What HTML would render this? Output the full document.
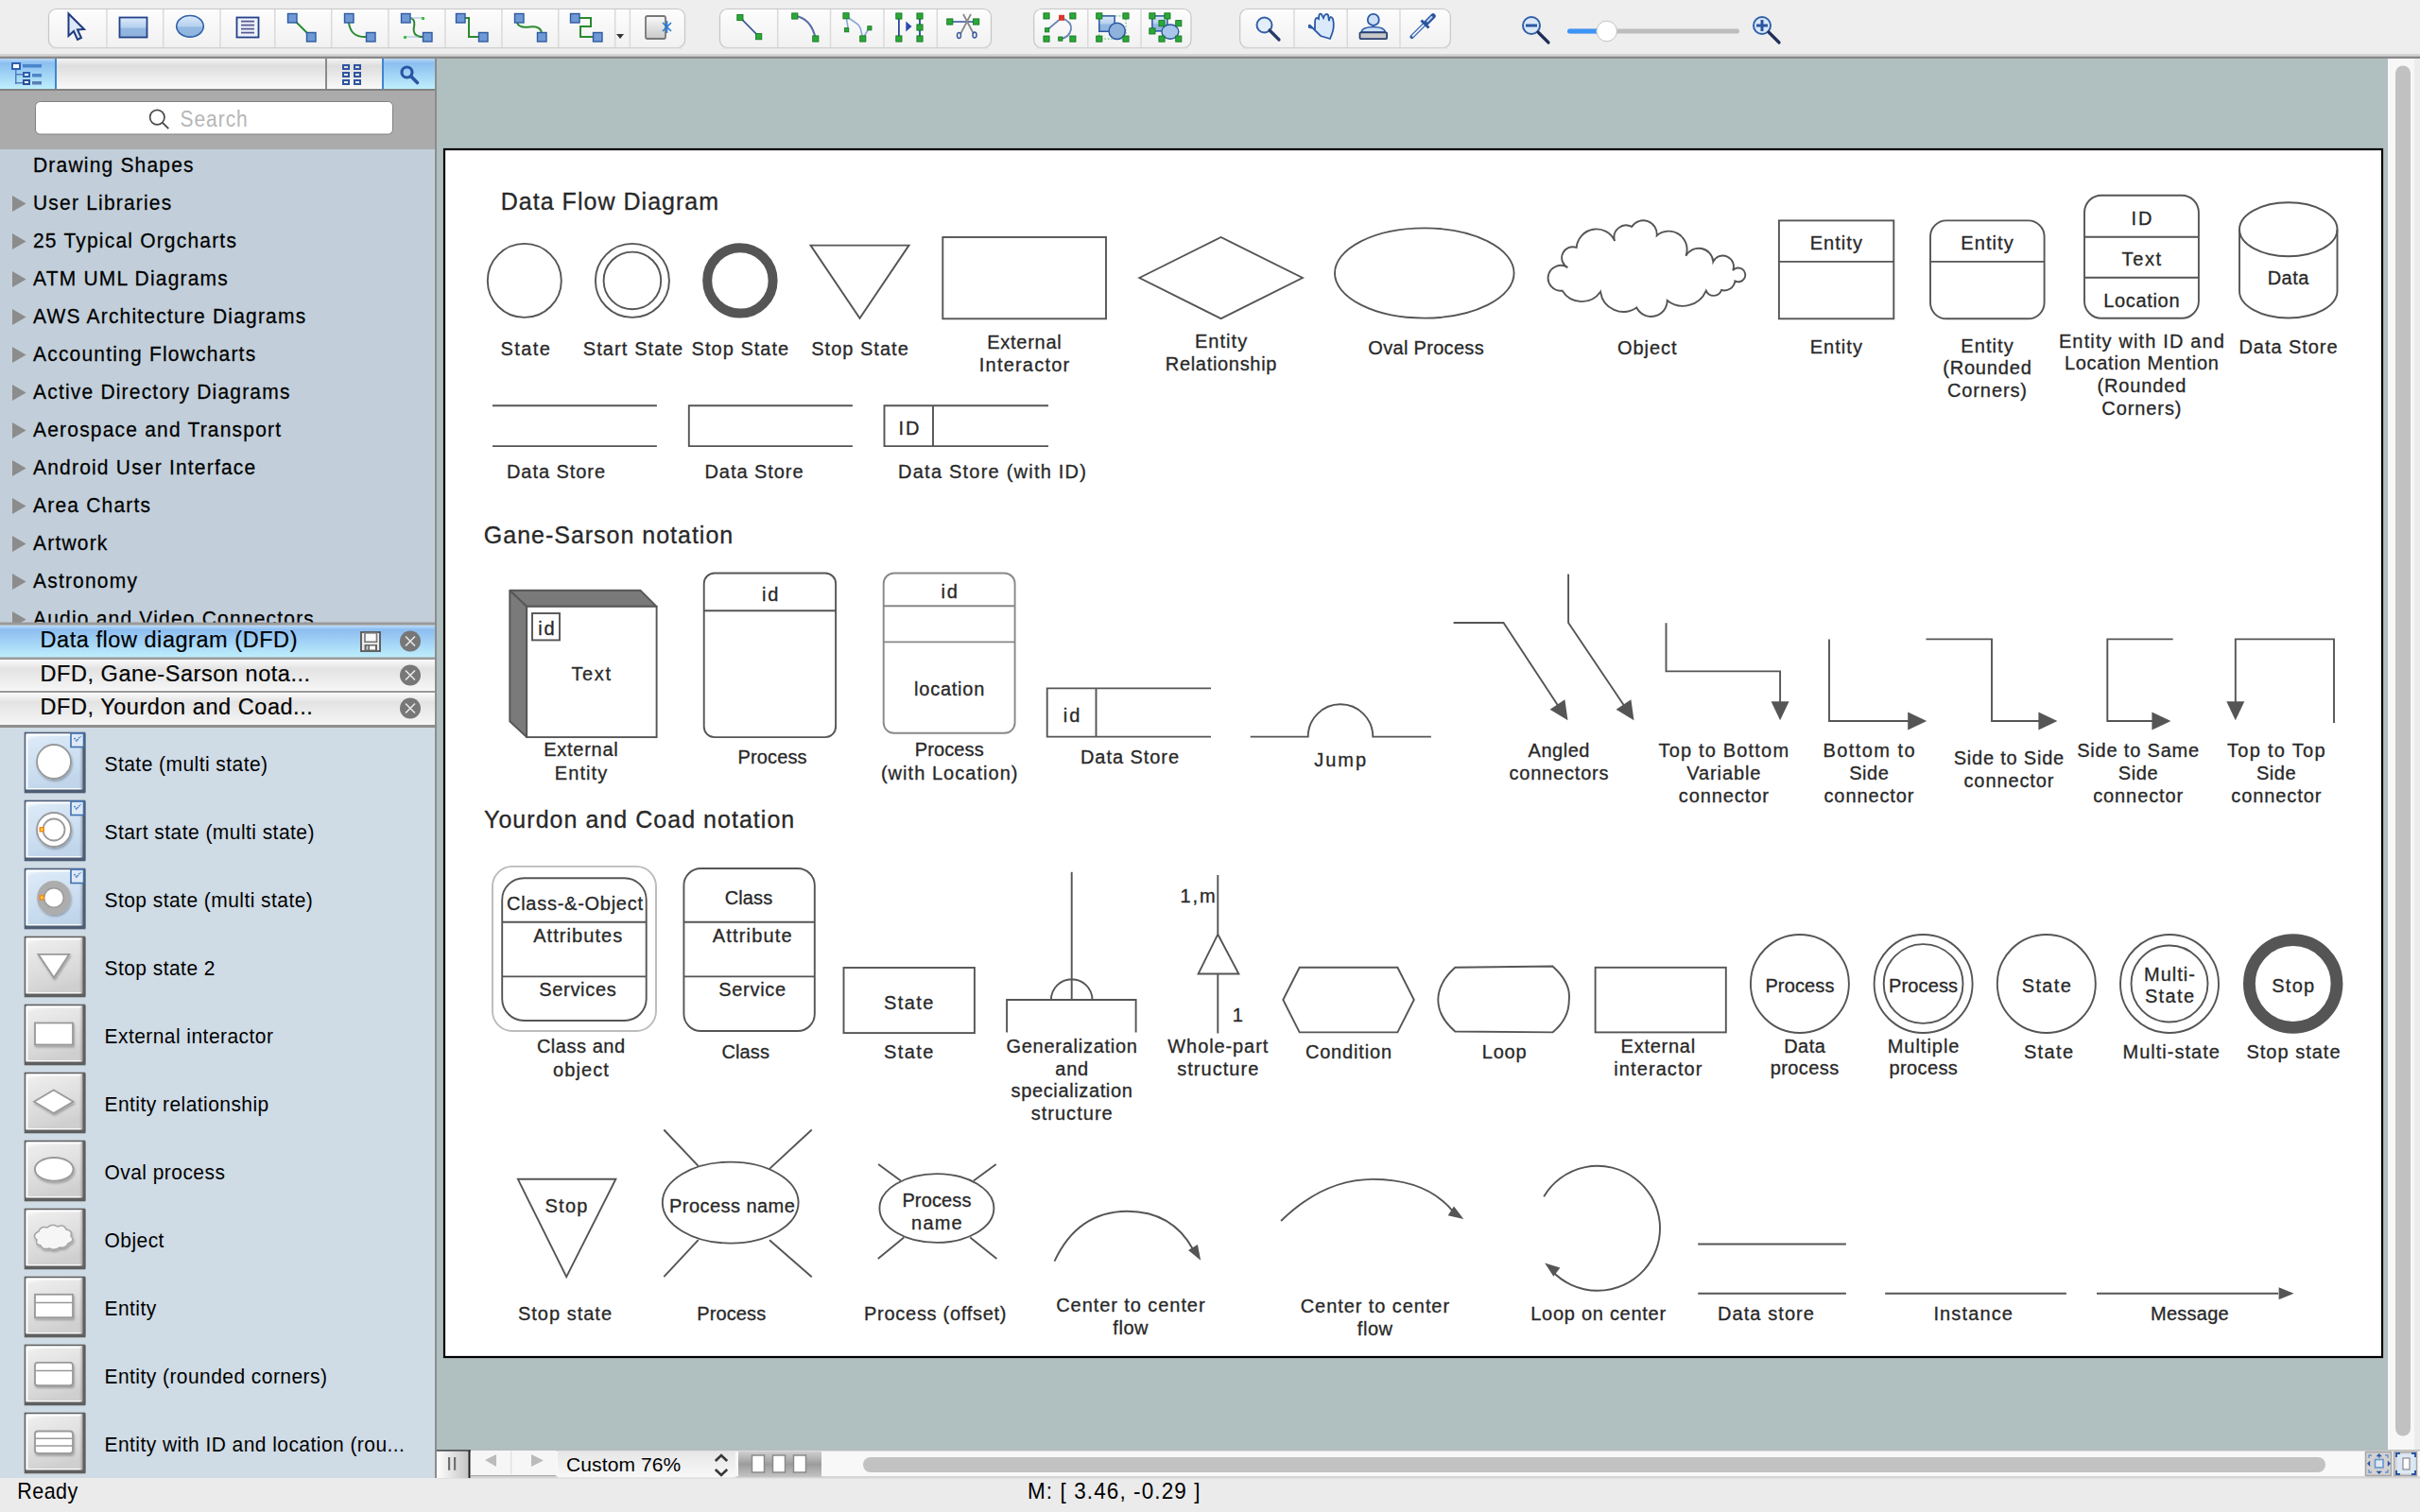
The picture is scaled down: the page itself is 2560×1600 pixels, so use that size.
<!DOCTYPE html>
<html><head><meta charset="utf-8"><title>ConceptDraw - DFD</title>
<style>html,body{margin:0;padding:0;background:#ececec;} body{width:2560px;height:1600px;overflow:hidden;} svg{display:block;font-family:"Liberation Sans", sans-serif;}</style>
</head><body>
<svg width="2560" height="1600" viewBox="0 0 2560 1600" font-family="Liberation Sans, sans-serif">
<defs><linearGradient id="pgbtnL" x1="0" y1="0" x2="0" y2="1"><stop offset="0" stop-color="#fafafa"/><stop offset="1" stop-color="#c8c8c8"/></linearGradient></defs>
<rect x="0" y="0" width="2560" height="1600" fill="#ebebeb"/>
<rect x="0" y="0" width="2560" height="60" fill="#eeeeee"/>
<rect x="0" y="57" width="2560" height="2.6" fill="#d4d4d4"/>
<rect x="0" y="59.6" width="2560" height="2.4" fill="#898989"/>
<rect x="462" y="62" width="2064" height="1472" fill="#b0bfbf"/>
<rect x="2526" y="62" width="34" height="1472" fill="#f7f7f7"/>
<rect x="2554" y="62" width="6" height="1472" fill="#ececec"/>
<rect x="2534" y="69.5" width="16" height="1450" rx="8" fill="#c1c1c1"/>
<rect x="470" y="158" width="2050" height="1278" fill="#ffffff" stroke="#000" stroke-width="2.2"/>
<rect x="0" y="62" width="460" height="1502" fill="#cfdbe5"/>
<rect x="460" y="62" width="2" height="1502" fill="#8c8c8c"/>
<defs><linearGradient id="hdr" x1="0" y1="0" x2="0" y2="1"><stop offset="0" stop-color="#f3f3f3"/><stop offset="0.25" stop-color="#dedede"/><stop offset="1" stop-color="#f9f9f9"/></linearGradient><linearGradient id="blu" x1="0" y1="0" x2="0" y2="1"><stop offset="0" stop-color="#b9d7f5"/><stop offset="0.15" stop-color="#8bbff0"/><stop offset="1" stop-color="#bdeefc"/></linearGradient><linearGradient id="tabsel" x1="0" y1="0" x2="0" y2="1"><stop offset="0" stop-color="#bcdcfa"/><stop offset="0.13" stop-color="#8dbdf0"/><stop offset="1" stop-color="#bdeefc"/></linearGradient><linearGradient id="tab" x1="0" y1="0" x2="0" y2="1"><stop offset="0" stop-color="#fafafa"/><stop offset="0.3" stop-color="#e3e3e3"/><stop offset="1" stop-color="#f6f6f6"/></linearGradient><linearGradient id="tbtn" x1="0" y1="0" x2="0" y2="1"><stop offset="0" stop-color="#fdfdfd"/><stop offset="1" stop-color="#f1f1f1"/></linearGradient><linearGradient id="icoB" x1="0" y1="0" x2="0" y2="1"><stop offset="0" stop-color="#dcebfb"/><stop offset="0.5" stop-color="#b5d0ee"/><stop offset="0.55" stop-color="#93b8e2"/><stop offset="1" stop-color="#8fb3dc"/></linearGradient><linearGradient id="libI" x1="0" y1="0" x2="0.3" y2="1"><stop offset="0" stop-color="#ffffff"/><stop offset="0.12" stop-color="#ececec"/><stop offset="0.85" stop-color="#d6d6d6"/><stop offset="1" stop-color="#cfcfcf"/></linearGradient><linearGradient id="libIB" x1="0" y1="0" x2="0.3" y2="1"><stop offset="0" stop-color="#ffffff"/><stop offset="0.12" stop-color="#dbe9f7"/><stop offset="0.85" stop-color="#c6daee"/><stop offset="1" stop-color="#c0d4ea"/></linearGradient><linearGradient id="pgbtn" x1="0" y1="0" x2="0" y2="1"><stop offset="0" stop-color="#cfcfcf"/><stop offset="0.5" stop-color="#9c9c9c"/><stop offset="1" stop-color="#c4c4c4"/></linearGradient><linearGradient id="zsel" x1="0" y1="0" x2="0" y2="1"><stop offset="0" stop-color="#e6e6e6"/><stop offset="1" stop-color="#f8f8f8"/></linearGradient><linearGradient id="pausebg" x1="0" y1="0" x2="1" y2="0"><stop offset="0" stop-color="#ffffff"/><stop offset="1" stop-color="#c4c4c4"/></linearGradient><linearGradient id="libR" x1="0" y1="0" x2="1" y2="0"><stop offset="0" stop-color="#000" stop-opacity="0"/><stop offset="1" stop-color="#000" stop-opacity="0.25"/></linearGradient><filter id="lsh" x="-30%" y="-30%" width="160%" height="160%"><feDropShadow dx="1" dy="2" stdDeviation="1.3" flood-color="#000" flood-opacity="0.26"/></filter><linearGradient id="bbar" x1="0" y1="0" x2="0" y2="1"><stop offset="0" stop-color="#ffffff"/><stop offset="1" stop-color="#ececec"/></linearGradient></defs>
<rect x="0" y="62" width="460" height="32" fill="url(#hdr)"/>
<rect x="0" y="62" width="58" height="32" fill="url(#blu)"/>
<rect x="58" y="62" width="2" height="32" fill="#3f86cf"/>
<rect x="344" y="62" width="2" height="32" fill="#8a8a8a"/>
<rect x="404" y="62" width="56" height="32" fill="url(#blu)"/>
<rect x="404" y="62" width="2" height="32" fill="#3f86cf"/>
<rect x="0" y="94" width="460" height="2" fill="#828282"/>
<g fill="#3b6bb8"><rect x="12" y="66" width="10" height="8" fill="#2f5fb0"/><rect x="14" y="68" width="6" height="4" fill="#fff"/><rect x="24" y="68" width="20" height="3.5" fill="#4a86cc"/><rect x="16" y="74" width="1.5" height="15" fill="#4f7fc0"/><rect x="16" y="78" width="8" height="1.5" fill="#4f7fc0"/><rect x="16" y="87" width="8" height="1.5" fill="#4f7fc0"/><rect x="24" y="76" width="8" height="6" fill="#2f5fb0"/><rect x="26" y="78" width="4" height="2" fill="#fff"/><rect x="24" y="84" width="8" height="6" fill="#2a4f9c"/><rect x="26" y="86" width="4" height="2" fill="#fff"/><rect x="34" y="78" width="10" height="3.5" fill="#4f84c4"/><rect x="34" y="86" width="10" height="3.5" fill="#5a7fb0"/></g>
<rect x="363" y="69" width="6" height="4" fill="none" stroke="#2f55a0" stroke-width="2"/>
<rect x="363" y="77" width="6" height="4" fill="none" stroke="#2f55a0" stroke-width="2"/>
<rect x="363" y="85" width="6" height="4" fill="none" stroke="#2f55a0" stroke-width="2"/>
<rect x="375" y="69" width="6" height="4" fill="none" stroke="#2f55a0" stroke-width="2"/>
<rect x="375" y="77" width="6" height="4" fill="none" stroke="#2f55a0" stroke-width="2"/>
<rect x="375" y="85" width="6" height="4" fill="none" stroke="#2f55a0" stroke-width="2"/>
<circle cx="430.5" cy="76.5" r="5.5" fill="none" stroke="#2b55a3" stroke-width="3.2"/>
<line x1="434.5" y1="80.5" x2="441.5" y2="87.5" stroke="#2b55a3" stroke-width="3.6" stroke-linecap="round"/>
<rect x="0" y="96" width="460" height="62" fill="#ababab"/>
<rect x="37.5" y="107.5" width="378" height="34.5" rx="5" fill="#fff" stroke="#808080" stroke-width="1"/>
<circle cx="166.3" cy="124.1" r="7.7" fill="none" stroke="#4a4a4a" stroke-width="1.7"/>
<line x1="171.7" y1="129.6" x2="178.3" y2="136.2" stroke="#4a4a4a" stroke-width="1.9"/>
<text transform="translate(190.5 134) scale(1 1.1)" font-size="21" text-anchor="start" fill="#b6b6b6" letter-spacing="0.95" >Search</text>
<rect x="0" y="158" width="460" height="501" fill="#c2cfda"/>
<clipPath id="treeclip"><rect x="0" y="158" width="460" height="501"/></clipPath><g clip-path="url(#treeclip)">
<text transform="translate(35 182) scale(1 1.09)" font-size="21" text-anchor="start" fill="#000" letter-spacing="1.2" stroke="#000" stroke-width="0.25">Drawing Shapes</text>
<path d="M13 207 L27.6 215.5 L13 224 Z" fill="#8c8c8c"/>
<text transform="translate(35 222) scale(1 1.09)" font-size="21" text-anchor="start" fill="#000" letter-spacing="1.2" stroke="#000" stroke-width="0.25">User Libraries</text>
<path d="M13 247 L27.6 255.5 L13 264 Z" fill="#8c8c8c"/>
<text transform="translate(35 262) scale(1 1.09)" font-size="21" text-anchor="start" fill="#000" letter-spacing="1.2" stroke="#000" stroke-width="0.25">25 Typical Orgcharts</text>
<path d="M13 287 L27.6 295.5 L13 304 Z" fill="#8c8c8c"/>
<text transform="translate(35 302) scale(1 1.09)" font-size="21" text-anchor="start" fill="#000" letter-spacing="1.2" stroke="#000" stroke-width="0.25">ATM UML Diagrams</text>
<path d="M13 327 L27.6 335.5 L13 344 Z" fill="#8c8c8c"/>
<text transform="translate(35 342) scale(1 1.09)" font-size="21" text-anchor="start" fill="#000" letter-spacing="1.2" stroke="#000" stroke-width="0.25">AWS Architecture Diagrams</text>
<path d="M13 367 L27.6 375.5 L13 384 Z" fill="#8c8c8c"/>
<text transform="translate(35 382) scale(1 1.09)" font-size="21" text-anchor="start" fill="#000" letter-spacing="1.2" stroke="#000" stroke-width="0.25">Accounting Flowcharts</text>
<path d="M13 407 L27.6 415.5 L13 424 Z" fill="#8c8c8c"/>
<text transform="translate(35 422) scale(1 1.09)" font-size="21" text-anchor="start" fill="#000" letter-spacing="1.2" stroke="#000" stroke-width="0.25">Active Directory Diagrams</text>
<path d="M13 447 L27.6 455.5 L13 464 Z" fill="#8c8c8c"/>
<text transform="translate(35 462) scale(1 1.09)" font-size="21" text-anchor="start" fill="#000" letter-spacing="1.2" stroke="#000" stroke-width="0.25">Aerospace and Transport</text>
<path d="M13 487 L27.6 495.5 L13 504 Z" fill="#8c8c8c"/>
<text transform="translate(35 502) scale(1 1.09)" font-size="21" text-anchor="start" fill="#000" letter-spacing="1.2" stroke="#000" stroke-width="0.25">Android User Interface</text>
<path d="M13 527 L27.6 535.5 L13 544 Z" fill="#8c8c8c"/>
<text transform="translate(35 542) scale(1 1.09)" font-size="21" text-anchor="start" fill="#000" letter-spacing="1.2" stroke="#000" stroke-width="0.25">Area Charts</text>
<path d="M13 567 L27.6 575.5 L13 584 Z" fill="#8c8c8c"/>
<text transform="translate(35 582) scale(1 1.09)" font-size="21" text-anchor="start" fill="#000" letter-spacing="1.2" stroke="#000" stroke-width="0.25">Artwork</text>
<path d="M13 607 L27.6 615.5 L13 624 Z" fill="#8c8c8c"/>
<text transform="translate(35 622) scale(1 1.09)" font-size="21" text-anchor="start" fill="#000" letter-spacing="1.2" stroke="#000" stroke-width="0.25">Astronomy</text>
<path d="M13 647 L27.6 655.5 L13 664 Z" fill="#8c8c8c"/>
<text transform="translate(35 662) scale(1 1.09)" font-size="21" text-anchor="start" fill="#000" letter-spacing="1.2" stroke="#000" stroke-width="0.25">Audio and Video Connectors</text>
</g>
<rect x="0" y="658.5" width="460" height="3" fill="#9a9a9a"/>
<rect x="0" y="662" width="460" height="33.5" fill="url(#tabsel)"/>
<text x="42.5" y="685.2" font-size="23.5" text-anchor="start" fill="#000" letter-spacing="0.55" stroke="#000" stroke-width="0.2">Data flow diagram (DFD)</text>
<circle cx="434" cy="678.5" r="11" fill="#777"/>
<path d="M429 673.5 L439 683.5 M439 673.5 L429 683.5" stroke="#e8e8e8" stroke-width="1.6"/>
<rect x="0" y="695.5" width="460" height="2.5" fill="#9a9a9a"/>
<rect x="0" y="698" width="460" height="33" fill="url(#tab)"/>
<text x="42.5" y="721.2" font-size="23.5" text-anchor="start" fill="#000" letter-spacing="0.55" stroke="#000" stroke-width="0.2">DFD, Gane-Sarson nota...</text>
<circle cx="434" cy="714.5" r="11" fill="#777"/>
<path d="M429 709.5 L439 719.5 M439 709.5 L429 719.5" stroke="#e8e8e8" stroke-width="1.6"/>
<rect x="0" y="731" width="460" height="2.5" fill="#9a9a9a"/>
<rect x="0" y="733" width="460" height="34" fill="url(#tab)"/>
<text x="42.5" y="756.2" font-size="23.5" text-anchor="start" fill="#000" letter-spacing="0.55" stroke="#000" stroke-width="0.2">DFD, Yourdon and Coad...</text>
<circle cx="434" cy="749.5" r="11" fill="#777"/>
<path d="M429 744.5 L439 754.5 M439 744.5 L429 754.5" stroke="#e8e8e8" stroke-width="1.6"/>
<rect x="0" y="767" width="460" height="3" fill="#8e8e8e"/>
<rect x="382" y="669" width="20" height="20" fill="#ececec" stroke="#555" stroke-width="1.8"/>
<rect x="386" y="669.8" width="12.5" height="9.5" fill="#fafafa" stroke="#777" stroke-width="1.6"/>
<rect x="385.5" y="682" width="13.5" height="7" fill="#666"/><rect x="391" y="683.5" width="6" height="4" fill="#fafafa"/><rect x="387.5" y="683.5" width="2" height="4" fill="#ccc"/>
<rect x="26.5" y="775.5" width="63" height="63" fill="#c8dbef" stroke="#4d5d73" stroke-width="1.6"/>
<rect x="28" y="777" width="59" height="59" fill="url(#libIB)"/>
<path d="M28.5 835 L86 835 M28.5 777.5 L86 777.5 M28.5 777.5 L28.5 835" stroke="#fff" stroke-width="2" opacity="0.9"/>
<rect x="84" y="777" width="4" height="59" fill="url(#libR)"/>
<path d="M27 837 L89 837 L89 776" fill="none" stroke="#4d5d73" stroke-width="3"/>
<text transform="translate(110.5 815.5) scale(1 1.08)" font-size="21" text-anchor="start" fill="#000" letter-spacing="0.45" >State (multi state)</text>
<g filter="url(#lsh)">
<circle cx="57" cy="806" r="18" fill="#fff" stroke="#999" stroke-width="1.8"/>
</g>
<rect x="75" y="776" width="13.5" height="14.5" fill="#dfeaf6" stroke="#3f70b0" stroke-width="1.6"/>
<path d="M78.5 781 L81 784 L85.5 779" fill="none" stroke="#3f78c0" stroke-width="1.6" stroke-dasharray="1.5 1"/>
<rect x="26.5" y="847.5" width="63" height="63" fill="#c8dbef" stroke="#4d5d73" stroke-width="1.6"/>
<rect x="28" y="849" width="59" height="59" fill="url(#libIB)"/>
<path d="M28.5 907 L86 907 M28.5 849.5 L86 849.5 M28.5 849.5 L28.5 907" stroke="#fff" stroke-width="2" opacity="0.9"/>
<rect x="84" y="849" width="4" height="59" fill="url(#libR)"/>
<path d="M27 909 L89 909 L89 848" fill="none" stroke="#4d5d73" stroke-width="3"/>
<text transform="translate(110.5 887.5) scale(1 1.08)" font-size="21" text-anchor="start" fill="#000" letter-spacing="0.45" >Start state (multi state)</text>
<g filter="url(#lsh)">
<circle cx="57" cy="878" r="18" fill="#fff" stroke="#999" stroke-width="1.8"/>
<circle cx="57" cy="878" r="11.5" fill="#fff" stroke="#999" stroke-width="1.8"/>
<rect x="41.5" y="875" width="5.5" height="5.5" fill="#f08a20"/><rect x="43" y="876.5" width="2.5" height="2.5" fill="#ffd040"/>
</g>
<rect x="75" y="848" width="13.5" height="14.5" fill="#dfeaf6" stroke="#3f70b0" stroke-width="1.6"/>
<path d="M78.5 853 L81 856 L85.5 851" fill="none" stroke="#3f78c0" stroke-width="1.6" stroke-dasharray="1.5 1"/>
<rect x="26.5" y="919.5" width="63" height="63" fill="#c8dbef" stroke="#4d5d73" stroke-width="1.6"/>
<rect x="28" y="921" width="59" height="59" fill="url(#libIB)"/>
<path d="M28.5 979 L86 979 M28.5 921.5 L86 921.5 M28.5 921.5 L28.5 979" stroke="#fff" stroke-width="2" opacity="0.9"/>
<rect x="84" y="921" width="4" height="59" fill="url(#libR)"/>
<path d="M27 981 L89 981 L89 920" fill="none" stroke="#4d5d73" stroke-width="3"/>
<text transform="translate(110.5 959.5) scale(1 1.08)" font-size="21" text-anchor="start" fill="#000" letter-spacing="0.45" >Stop state (multi state)</text>
<g filter="url(#lsh)">
<circle cx="57" cy="950" r="14.2" fill="#fff" stroke="#adadad" stroke-width="7.4"/>
<circle cx="57" cy="950" r="10.3" fill="#fff" stroke="#999" stroke-width="1.4"/>
<rect x="41.5" y="947" width="5.5" height="5.5" fill="#f08a20"/><rect x="43" y="948.5" width="2.5" height="2.5" fill="#ffd040"/>
</g>
<rect x="75" y="920" width="13.5" height="14.5" fill="#dfeaf6" stroke="#3f70b0" stroke-width="1.6"/>
<path d="M78.5 925 L81 928 L85.5 923" fill="none" stroke="#3f78c0" stroke-width="1.6" stroke-dasharray="1.5 1"/>
<rect x="26.5" y="991.5" width="63" height="63" fill="#d9d9d9" stroke="#5f5f5f" stroke-width="1.6"/>
<rect x="28" y="993" width="59" height="59" fill="url(#libI)"/>
<path d="M28.5 1051 L86 1051 M28.5 993.5 L86 993.5 M28.5 993.5 L28.5 1051" stroke="#fff" stroke-width="2" opacity="0.9"/>
<rect x="84" y="993" width="4" height="59" fill="url(#libR)"/>
<path d="M27 1053 L89 1053 L89 992" fill="none" stroke="#5f5f5f" stroke-width="3"/>
<text transform="translate(110.5 1031.5) scale(1 1.08)" font-size="21" text-anchor="start" fill="#000" letter-spacing="0.45" >Stop state 2</text>
<g filter="url(#lsh)">
<path d="M40.5 1009.8 L73.3 1009.8 L57 1034.5 Z" fill="#fff" stroke="#999" stroke-width="1.8"/>
</g>
<rect x="26.5" y="1063.5" width="63" height="63" fill="#d9d9d9" stroke="#5f5f5f" stroke-width="1.6"/>
<rect x="28" y="1065" width="59" height="59" fill="url(#libI)"/>
<path d="M28.5 1123 L86 1123 M28.5 1065.5 L86 1065.5 M28.5 1065.5 L28.5 1123" stroke="#fff" stroke-width="2" opacity="0.9"/>
<rect x="84" y="1065" width="4" height="59" fill="url(#libR)"/>
<path d="M27 1125 L89 1125 L89 1064" fill="none" stroke="#5f5f5f" stroke-width="3"/>
<text transform="translate(110.5 1103.5) scale(1 1.08)" font-size="21" text-anchor="start" fill="#000" letter-spacing="0.45" >External interactor</text>
<g filter="url(#lsh)">
<rect x="37" y="1082.5" width="40" height="23" fill="#fff" stroke="#999" stroke-width="1.8"/>
</g>
<rect x="26.5" y="1135.5" width="63" height="63" fill="#d9d9d9" stroke="#5f5f5f" stroke-width="1.6"/>
<rect x="28" y="1137" width="59" height="59" fill="url(#libI)"/>
<path d="M28.5 1195 L86 1195 M28.5 1137.5 L86 1137.5 M28.5 1137.5 L28.5 1195" stroke="#fff" stroke-width="2" opacity="0.9"/>
<rect x="84" y="1137" width="4" height="59" fill="url(#libR)"/>
<path d="M27 1197 L89 1197 L89 1136" fill="none" stroke="#5f5f5f" stroke-width="3"/>
<text transform="translate(110.5 1175.5) scale(1 1.08)" font-size="21" text-anchor="start" fill="#000" letter-spacing="0.45" >Entity relationship</text>
<g filter="url(#lsh)">
<path d="M36 1165.7 L56.7 1153.5 L77.5 1165.7 L56.7 1178 Z" fill="#fff" stroke="#999" stroke-width="1.8"/>
</g>
<rect x="26.5" y="1207.5" width="63" height="63" fill="#d9d9d9" stroke="#5f5f5f" stroke-width="1.6"/>
<rect x="28" y="1209" width="59" height="59" fill="url(#libI)"/>
<path d="M28.5 1267 L86 1267 M28.5 1209.5 L86 1209.5 M28.5 1209.5 L28.5 1267" stroke="#fff" stroke-width="2" opacity="0.9"/>
<rect x="84" y="1209" width="4" height="59" fill="url(#libR)"/>
<path d="M27 1269 L89 1269 L89 1208" fill="none" stroke="#5f5f5f" stroke-width="3"/>
<text transform="translate(110.5 1247.5) scale(1 1.08)" font-size="21" text-anchor="start" fill="#000" letter-spacing="0.45" >Oval process</text>
<g filter="url(#lsh)">
<ellipse cx="57.2" cy="1237.3" rx="20.3" ry="12.3" fill="#fff" stroke="#999" stroke-width="1.8"/>
</g>
<rect x="26.5" y="1279.5" width="63" height="63" fill="#d9d9d9" stroke="#5f5f5f" stroke-width="1.6"/>
<rect x="28" y="1281" width="59" height="59" fill="url(#libI)"/>
<path d="M28.5 1339 L86 1339 M28.5 1281.5 L86 1281.5 M28.5 1281.5 L28.5 1339" stroke="#fff" stroke-width="2" opacity="0.9"/>
<rect x="84" y="1281" width="4" height="59" fill="url(#libR)"/>
<path d="M27 1341 L89 1341 L89 1280" fill="none" stroke="#5f5f5f" stroke-width="3"/>
<text transform="translate(110.5 1319.5) scale(1 1.08)" font-size="21" text-anchor="start" fill="#000" letter-spacing="0.45" >Object</text>
<g filter="url(#lsh)">
<path d="M39 1312 q-6 -5 2 -9 q2 -6 9 -4 q5 -5 11 -1 q7 -3 9 3 q7 1 5 7 q5 5 -3 8 q-2 5 -9 4 q-5 4 -11 1 q-7 2 -9 -3 q-6 -1 -4 -6z" fill="#f6f6f6" stroke="#a5a5a5" stroke-width="1.5"/>
</g>
<rect x="26.5" y="1351.5" width="63" height="63" fill="#d9d9d9" stroke="#5f5f5f" stroke-width="1.6"/>
<rect x="28" y="1353" width="59" height="59" fill="url(#libI)"/>
<path d="M28.5 1411 L86 1411 M28.5 1353.5 L86 1353.5 M28.5 1353.5 L28.5 1411" stroke="#fff" stroke-width="2" opacity="0.9"/>
<rect x="84" y="1353" width="4" height="59" fill="url(#libR)"/>
<path d="M27 1413 L89 1413 L89 1352" fill="none" stroke="#5f5f5f" stroke-width="3"/>
<text transform="translate(110.5 1391.5) scale(1 1.08)" font-size="21" text-anchor="start" fill="#000" letter-spacing="0.45" >Entity</text>
<g filter="url(#lsh)">
<rect x="37" y="1369.8" width="40" height="24.4" rx="0" fill="#fff" stroke="#999" stroke-width="1.8"/>
<line x1="37.5" y1="1378.5" x2="76.5" y2="1378.5" stroke="#999" stroke-width="1.6"/>
</g>
<rect x="26.5" y="1423.5" width="63" height="63" fill="#d9d9d9" stroke="#5f5f5f" stroke-width="1.6"/>
<rect x="28" y="1425" width="59" height="59" fill="url(#libI)"/>
<path d="M28.5 1483 L86 1483 M28.5 1425.5 L86 1425.5 M28.5 1425.5 L28.5 1483" stroke="#fff" stroke-width="2" opacity="0.9"/>
<rect x="84" y="1425" width="4" height="59" fill="url(#libR)"/>
<path d="M27 1485 L89 1485 L89 1424" fill="none" stroke="#5f5f5f" stroke-width="3"/>
<text transform="translate(110.5 1463.5) scale(1 1.08)" font-size="21" text-anchor="start" fill="#000" letter-spacing="0.45" >Entity (rounded corners)</text>
<g filter="url(#lsh)">
<rect x="37" y="1441.8" width="40" height="24.4" rx="3" fill="#fff" stroke="#999" stroke-width="1.8"/>
<line x1="37.5" y1="1450.5" x2="76.5" y2="1450.5" stroke="#999" stroke-width="1.6"/>
</g>
<rect x="26.5" y="1495.5" width="63" height="63" fill="#d9d9d9" stroke="#5f5f5f" stroke-width="1.6"/>
<rect x="28" y="1497" width="59" height="59" fill="url(#libI)"/>
<path d="M28.5 1555 L86 1555 M28.5 1497.5 L86 1497.5 M28.5 1497.5 L28.5 1555" stroke="#fff" stroke-width="2" opacity="0.9"/>
<rect x="84" y="1497" width="4" height="59" fill="url(#libR)"/>
<path d="M27 1557 L89 1557 L89 1496" fill="none" stroke="#5f5f5f" stroke-width="3"/>
<text transform="translate(110.5 1535.5) scale(1 1.08)" font-size="21" text-anchor="start" fill="#000" letter-spacing="0.45" >Entity with ID and location (rou...</text>
<g filter="url(#lsh)">
<rect x="37" y="1514.5" width="40" height="23.3" rx="3" fill="#fff" stroke="#999" stroke-width="1.8"/>
<line x1="37.5" y1="1522.3" x2="76.5" y2="1522.3" stroke="#999" stroke-width="1.6"/><line x1="37.5" y1="1530" x2="76.5" y2="1530" stroke="#999" stroke-width="1.6"/>
</g>
<rect x="0" y="1564" width="2560" height="36" fill="#ebebeb"/>
<rect x="462" y="1562" width="2098" height="2.5" fill="#d6d6d6"/>
<text transform="translate(18.2 1586) scale(1 1.12)" font-size="21.5" text-anchor="start" fill="#000" letter-spacing="0.5" >Ready</text>
<text transform="translate(1087 1586) scale(1 1.07)" font-size="22.5" text-anchor="start" fill="#000" letter-spacing="1.1" >M: [ 3.46, -0.29 ]</text>
<rect x="462" y="1534" width="2098" height="28" fill="#f8f8f8"/>
<rect x="462" y="1534" width="2098" height="1.5" fill="#bdbdbd"/>
<rect x="462" y="1535" width="34" height="29" fill="url(#pausebg)"/><rect x="462" y="1534" width="36" height="1.8" fill="#555"/>
<rect x="495.5" y="1535" width="2" height="29" fill="#222"/>
<rect x="474" y="1542" width="2.2" height="13.8" fill="#707070"/><rect x="480" y="1542" width="2.2" height="13.8" fill="#707070"/>
<rect x="498" y="1535" width="90" height="26" fill="#f6f6f6"/><rect x="498" y="1561" width="90" height="1.2" fill="#aaa"/>
<rect x="540" y="1535" width="1.5" height="25" fill="#e3e3e3"/>
<path d="M513 1545 L525 1539 L525 1552 Z" fill="#bbb"/><path d="M562 1539 L575 1545.5 L562 1552 Z" fill="#bbb"/>
<rect x="590" y="1535.5" width="188" height="28" fill="url(#zsel)"/>
<text x="599" y="1557.2" font-size="21" text-anchor="start" fill="#000" letter-spacing="0.12" >Custom 76%</text>
<path d="M756.8 1546 L763 1540 L769.2 1546 M756.8 1555 L763 1561 L769.2 1555" fill="none" stroke="#383838" stroke-width="2.6"/>
<rect x="781" y="1536" width="88" height="27" fill="url(#pgbtn)"/>
<rect x="795.5" y="1540" width="13" height="18" fill="#fff" stroke="#8a8a8a" stroke-width="1.5"/>
<rect x="817.5" y="1540" width="13" height="18" fill="#fff" stroke="#8a8a8a" stroke-width="1.5"/>
<rect x="839.5" y="1540" width="13" height="18" fill="#fff" stroke="#8a8a8a" stroke-width="1.5"/>
<rect x="913" y="1542" width="1547" height="16" rx="8" fill="#c2c2c2"/>
<rect x="2502.5" y="1536.5" width="27" height="25" fill="#d2d2d2" stroke="#a8a8a8" stroke-width="1.6"/>
<path d="M2506 1543 v-3 h3 M2526 1543 v-3 h-3 M2506 1555 v3 h3 M2526 1555 v3 h-3" fill="none" stroke="#6a90c8" stroke-width="1.3"/>
<rect x="2512.5" y="1544.5" width="8.5" height="8.5" fill="#dde9f6" stroke="#6a96c8" stroke-width="1.6"/>
<path d="M2516.75 1538 l-3.2 3.2 h6.4z M2515.8 1541 h2 v1.5 h-2z M2516.75 1560 l-3.2 -3.2 h6.4z M2504 1548.75 l3.2 -3.2 v6.4z M2529 1548.75 l-3.2 -3.2 v6.4z" fill="#2a56a8"/>
<rect x="2532.5" y="1536.5" width="24" height="25" fill="#d2d2d2" stroke="#a8a8a8" stroke-width="1.6"/>
<rect x="2535.5" y="1538.5" width="20" height="21" fill="#dce8f6"/>
<path d="M2535 1542 v-4 h4 M2555 1542 v-4 h-4 M2535 1556 v4 h4 M2555 1556 v4 h-4" fill="none" stroke="#2a56a8" stroke-width="2"/>
<rect x="2542" y="1543" width="7" height="12" fill="#fff" stroke="#8a8a8a" stroke-width="1.2"/>
<rect x="51.5" y="9.5" width="673.0" height="41" rx="8" fill="url(#tbtn)" stroke="#c6c6c6" stroke-width="1.2"/>
<rect x="54.5" y="50.5" width="667.0" height="1" fill="#dcdcdc"/>
<rect x="112.25" y="10" width="1.5" height="40" fill="#dadada"/>
<rect x="171.95" y="10" width="1.5" height="40" fill="#dadada"/>
<rect x="232.25" y="10" width="1.5" height="40" fill="#dadada"/>
<rect x="290.05" y="10" width="1.5" height="40" fill="#dadada"/>
<rect x="349.95" y="10" width="1.5" height="40" fill="#dadada"/>
<rect x="410.15" y="10" width="1.5" height="40" fill="#dadada"/>
<rect x="470.15" y="10" width="1.5" height="40" fill="#dadada"/>
<rect x="530.15" y="10" width="1.5" height="40" fill="#dadada"/>
<rect x="589.95" y="10" width="1.5" height="40" fill="#dadada"/>
<rect x="649.95" y="10" width="1.5" height="40" fill="#dadada"/>
<rect x="665.65" y="10" width="1.5" height="40" fill="#dadada"/>
<path d="M72.5 14.5 L72.5 38 L78 33 L82 42 L86 40 L82 31.5 L89 31 Z" fill="#dde9f8" stroke="#1f3a80" stroke-width="2" stroke-linejoin="miter"/>
<rect x="126.5" y="18.5" width="29" height="21" fill="url(#icoB)" stroke="#23408a" stroke-width="1.8"/>
<ellipse cx="201" cy="27.8" rx="14.3" ry="11.3" fill="url(#icoB)" stroke="#3060a8" stroke-width="1.6"/>
<rect x="250.5" y="18.5" width="23" height="21" fill="#eef4fc" stroke="#23408a" stroke-width="1.8"/>
<rect x="255" y="21.7" width="14" height="1.8" fill="#5a5a90"/>
<rect x="255" y="25.7" width="14" height="1.8" fill="#5a5a90"/>
<rect x="255" y="29.7" width="14" height="1.8" fill="#5a5a90"/>
<rect x="255" y="33.7" width="14" height="1.8" fill="#5a5a90"/>
<path d="M309 19 L329 39" stroke="#2b8a2f" stroke-width="2"/>
<rect x="304.5" y="14.5" width="9.5" height="9.5" fill="#6f99d4" stroke="#2f5aa0" stroke-width="1.4"/>
<rect x="324.5" y="34.5" width="9.5" height="9.5" fill="#6f99d4" stroke="#2f5aa0" stroke-width="1.4"/>
<path d="M369 24 Q371 40 388 39" fill="none" stroke="#2b8a2f" stroke-width="2"/>
<rect x="364.5" y="14.5" width="9.5" height="9.5" fill="#6f99d4" stroke="#2f5aa0" stroke-width="1.4"/>
<rect x="387.5" y="34.5" width="9.5" height="9.5" fill="#6f99d4" stroke="#2f5aa0" stroke-width="1.4"/>
<path d="M430 18.5 Q440 18 438 28 Q436 39 447 39" fill="none" stroke="#2b8a2f" stroke-width="2"/>
<path d="M433 19 L448 19 M428 39 L443 39" stroke="#9ab8dd" stroke-width="1.2"/>
<rect x="424.5" y="14.5" width="9.5" height="9.5" fill="#6f99d4" stroke="#2f5aa0" stroke-width="1.4"/>
<rect x="447.5" y="34.5" width="9.5" height="9.5" fill="#6f99d4" stroke="#2f5aa0" stroke-width="1.4"/>
<rect x="446" y="18" width="3" height="3" fill="#3fbf40"/><rect x="427" y="38" width="3" height="3" fill="#3fbf40"/>
<path d="M489 19 L496 19 L496 39 L507 39" fill="none" stroke="#2b8a2f" stroke-width="2"/>
<rect x="482.5" y="14.5" width="9.5" height="9.5" fill="#6f99d4" stroke="#2f5aa0" stroke-width="1.4"/>
<rect x="506.5" y="34.5" width="9.5" height="9.5" fill="#6f99d4" stroke="#2f5aa0" stroke-width="1.4"/>
<path d="M547 24 Q549 30 560 28.5 Q572 27 573 35" fill="none" stroke="#2b8a2f" stroke-width="2"/>
<rect x="544.5" y="14.5" width="9.5" height="9.5" fill="#6f99d4" stroke="#2f5aa0" stroke-width="1.4"/>
<rect x="568.5" y="34.5" width="9.5" height="9.5" fill="#6f99d4" stroke="#2f5aa0" stroke-width="1.4"/>
<path d="M612 19 L625 19 L625 28 L614 28 L614 39 L628 39" fill="none" stroke="#2b8a2f" stroke-width="2"/>
<rect x="603.5" y="14.5" width="9.5" height="9.5" fill="#6f99d4" stroke="#2f5aa0" stroke-width="1.4"/>
<rect x="627.5" y="34.5" width="9.5" height="9.5" fill="#6f99d4" stroke="#2f5aa0" stroke-width="1.4"/>
<path d="M652 36 L660 36 L656 41 Z" fill="#333"/>
<rect x="683" y="17" width="21" height="24" rx="2" fill="url(#pgbtnL)" stroke="#777" stroke-width="1.8"/>
<path d="M701 24 L710 33 M710 24 L701 33 M705.5 22 L705.5 35" stroke="#2a7ad0" stroke-width="1.6"/>
<rect x="761.5" y="9.5" width="287.0" height="41" rx="8" fill="url(#tbtn)" stroke="#c6c6c6" stroke-width="1.2"/>
<rect x="764.5" y="50.5" width="281.0" height="1" fill="#dcdcdc"/>
<rect x="821.95" y="10" width="1.5" height="40" fill="#dadada"/>
<rect x="877.75" y="10" width="1.5" height="40" fill="#dadada"/>
<rect x="934.25" y="10" width="1.5" height="40" fill="#dadada"/>
<rect x="990.55" y="10" width="1.5" height="40" fill="#dadada"/>
<path d="M783 18.6 L802.7 38.7" stroke="#3a5a9a" stroke-width="1.7"/>
<rect x="779.8" y="15.5" width="6.2" height="6.2" fill="#2aa838" stroke="#0f6e1a" stroke-width="0.8"/>
<rect x="799.6" y="35.6" width="6.2" height="6.2" fill="#2aa838" stroke="#0f6e1a" stroke-width="0.8"/>
<path d="M841 17 Q858 19 862.8 41" fill="none" stroke="#5a6ea8" stroke-width="2.2"/>
<rect x="837.7" y="13.9" width="6.2" height="6.2" fill="#2aa838" stroke="#0f6e1a" stroke-width="0.8"/>
<rect x="859.7" y="37.9" width="6.2" height="6.2" fill="#2aa838" stroke="#0f6e1a" stroke-width="0.8"/>
<path d="M895 17 L897 29 M895 17 L905 24 Q910 27 911 33 L912.8 41 L919 30" fill="none" stroke="#8aa8d8" stroke-width="1.6"/>
<rect x="891.9" y="13.7" width="6.2" height="6.2" fill="#2aa838" stroke="#0f6e1a" stroke-width="0.8"/>
<rect x="909.7" y="37.9" width="6.2" height="6.2" fill="#2aa838" stroke="#0f6e1a" stroke-width="0.8"/>
<rect x="893.6" y="29.6" width="4.2" height="4.2" fill="#2aa838" stroke="#0f6e1a" stroke-width="0.8"/>
<rect x="917.8" y="27.7" width="4.2" height="4.2" fill="#2aa838" stroke="#0f6e1a" stroke-width="0.8"/>
<path d="M950.9 17 L950.9 41 M973 17 L973 41" stroke="#2a4a9a" stroke-width="1.8"/><path d="M958.3 22.4 L964.5 28 L958.3 33.5 Z" fill="#2a4ab0"/>
<rect x="947.8" y="13.9" width="6.2" height="6.2" fill="#2aa838" stroke="#0f6e1a" stroke-width="0.8"/>
<rect x="947.8" y="37.9" width="6.2" height="6.2" fill="#2aa838" stroke="#0f6e1a" stroke-width="0.8"/>
<rect x="969.9" y="13.9" width="6.2" height="6.2" fill="#2aa838" stroke="#0f6e1a" stroke-width="0.8"/>
<rect x="969.9" y="25.9" width="6.2" height="6.2" fill="#2aa838" stroke="#0f6e1a" stroke-width="0.8"/>
<rect x="969.9" y="37.9" width="6.2" height="6.2" fill="#2aa838" stroke="#0f6e1a" stroke-width="0.8"/>
<path d="M1006 23 L1032 23" stroke="#3a5aa0" stroke-width="1.6"/><path d="M1019 15 L1030 36 M1027 15 L1016 36" stroke="#8a8a8a" stroke-width="1.8"/><ellipse cx="1014.5" cy="37.5" rx="2" ry="3" fill="none" stroke="#3a5aa0" stroke-width="1.5"/><ellipse cx="1031" cy="37" rx="2" ry="3" fill="none" stroke="#3a5aa0" stroke-width="1.5"/>
<rect x="1001.7" y="19.9" width="6.2" height="6.2" fill="#2aa838" stroke="#0f6e1a" stroke-width="0.8"/>
<rect x="1029.6" y="19.9" width="6.2" height="6.2" fill="#2aa838" stroke="#0f6e1a" stroke-width="0.8"/>
<rect x="1093.7" y="9.5" width="166.29999999999995" height="41" rx="8" fill="url(#tbtn)" stroke="#c6c6c6" stroke-width="1.2"/>
<rect x="1096.7" y="50.5" width="160.29999999999995" height="1" fill="#dcdcdc"/>
<rect x="1150.05" y="10" width="1.5" height="40" fill="#dadada"/>
<rect x="1206.25" y="10" width="1.5" height="40" fill="#dadada"/>
<path d="M1108 31.5 L1123 18.8 Q1134 23 1133 31 Q1131 40 1122 41" fill="none" stroke="#6a84b8" stroke-width="1.8"/>
<rect x="1103.9" y="13.8" width="6.2" height="6.2" fill="#2aa838" stroke="#0f6e1a" stroke-width="0.8"/>
<rect x="1131.8" y="13.8" width="6.2" height="6.2" fill="#2aa838" stroke="#0f6e1a" stroke-width="0.8"/>
<rect x="1103.9" y="38.0" width="6.2" height="6.2" fill="#2aa838" stroke="#0f6e1a" stroke-width="0.8"/>
<rect x="1131.8" y="38.0" width="6.2" height="6.2" fill="#2aa838" stroke="#0f6e1a" stroke-width="0.8"/>
<rect x="1105.6" y="29.7" width="4.2" height="4.2" fill="#2aa838" stroke="#0f6e1a" stroke-width="0.8"/>
<rect x="1119.7" y="39.0" width="4.2" height="4.2" fill="#2aa838" stroke="#0f6e1a" stroke-width="0.8"/>
<rect x="1120" y="15.8" width="6" height="6" fill="#d83a2a"/>
<rect x="1162.8" y="16.9" width="28.2" height="24.2" fill="none" stroke="#2aa838" stroke-width="0.9" stroke-dasharray="1.5 2"/>
<rect x="1162.8" y="16.9" width="16.3" height="16.4" fill="url(#icoB)" stroke="#2a56a0" stroke-width="1.5"/><circle cx="1181.7" cy="32.9" r="8.6" fill="#8fb2dc" stroke="#2a56a0" stroke-width="1.5"/>
<rect x="1159.7" y="13.8" width="6.2" height="6.2" fill="#2aa838" stroke="#0f6e1a" stroke-width="0.8"/>
<rect x="1187.9" y="13.8" width="6.2" height="6.2" fill="#2aa838" stroke="#0f6e1a" stroke-width="0.8"/>
<rect x="1159.7" y="38.0" width="6.2" height="6.2" fill="#2aa838" stroke="#0f6e1a" stroke-width="0.8"/>
<rect x="1187.9" y="38.0" width="6.2" height="6.2" fill="#2aa838" stroke="#0f6e1a" stroke-width="0.8"/>
<rect x="1218.9" y="16.9" width="16" height="16" fill="url(#icoB)" stroke="#2a56a0" stroke-width="1.5"/><ellipse cx="1237.9" cy="33.6" rx="9" ry="7.6" fill="#a8c6ea" stroke="#2a56a0" stroke-width="1.4"/>
<rect x="1215.8" y="13.8" width="6.2" height="6.2" fill="#2aa838" stroke="#0f6e1a" stroke-width="0.8"/>
<rect x="1231.8" y="13.8" width="6.2" height="6.2" fill="#2aa838" stroke="#0f6e1a" stroke-width="0.8"/>
<rect x="1215.8" y="29.8" width="6.2" height="6.2" fill="#2aa838" stroke="#0f6e1a" stroke-width="0.8"/>
<rect x="1225.9" y="21.6" width="6.2" height="6.2" fill="#2aa838" stroke="#0f6e1a" stroke-width="0.8"/>
<rect x="1243.7" y="21.6" width="6.2" height="6.2" fill="#2aa838" stroke="#0f6e1a" stroke-width="0.8"/>
<rect x="1225.9" y="38.0" width="6.2" height="6.2" fill="#2aa838" stroke="#0f6e1a" stroke-width="0.8"/>
<rect x="1243.7" y="38.0" width="6.2" height="6.2" fill="#2aa838" stroke="#0f6e1a" stroke-width="0.8"/>
<rect x="1311.7" y="9.5" width="222.5999999999999" height="41" rx="8" fill="url(#tbtn)" stroke="#c6c6c6" stroke-width="1.2"/>
<rect x="1314.7" y="50.5" width="216.5999999999999" height="1" fill="#dcdcdc"/>
<rect x="1368.25" y="10" width="1.5" height="40" fill="#dadada"/>
<rect x="1424.45" y="10" width="1.5" height="40" fill="#dadada"/>
<rect x="1480.25" y="10" width="1.5" height="40" fill="#dadada"/>
<circle cx="1337.5" cy="26.5" r="8" fill="#e3eefb" stroke="#3060a8" stroke-width="2"/><path d="M1343 32 L1353 42" stroke="#2a3a6a" stroke-width="3.2" stroke-linecap="round"/>
<path d="M1389 30 L1397 38 L1407 41 L1409 36 Q1412 28 1410 20 Q1407 15 1406 22 L1405 16 Q1402 13 1400 19 L1398 15 Q1395 13 1395 20 L1393 19 Q1391 19 1391 25 L1391 32 L1386 27 Q1384 26 1385 29 Z" fill="#dbeafb" stroke="#2a5aa8" stroke-width="1.8"/>
<circle cx="1452.8" cy="20.9" r="6" fill="#cddff5" stroke="#2a5aa8" stroke-width="1.8"/><path d="M1452.8 27 L1452.8 30" stroke="#2a5aa8" stroke-width="2"/><path d="M1440 34 Q1441 28.5 1452.8 28.5 Q1464.5 28.5 1465.5 34 Z" fill="#cddff5" stroke="#2a5aa8" stroke-width="1.6"/><rect x="1438.5" y="34.3" width="28.6" height="6.8" rx="1" fill="#c9c9c9" stroke="#2a4070" stroke-width="1.8"/>
<path d="M1493.5 39 L1508 24.5" stroke="#3060a8" stroke-width="4.2" stroke-linecap="round"/><path d="M1494 38.5 L1507.5 25" stroke="#e9f1fb" stroke-width="1.8"/><path d="M1503.5 21.5 L1511.5 29.5" stroke="#2a56a0" stroke-width="3"/><path d="M1509 24 L1516 17" stroke="#2a56a0" stroke-width="5.5" stroke-linecap="round"/><path d="M1510 22.5 L1514.5 18" stroke="#bcd3ef" stroke-width="2" stroke-linecap="round"/>
<circle cx="1620" cy="27" r="9" fill="#dbe8f8" stroke="#3060a8" stroke-width="2"/><rect x="1614" y="25.5" width="12" height="3" fill="#2a56a0"/><path d="M1627 34 L1638 45" stroke="#1f2f5a" stroke-width="3.2" stroke-linecap="round"/>
<rect x="1658" y="30.5" width="182" height="5" rx="2.5" fill="#bdbdbd"/><rect x="1658" y="30.5" width="42" height="5" rx="2.5" fill="#3d94f6"/>
<circle cx="1699.7" cy="33" r="10.8" fill="#fff" stroke="#c2c2c2" stroke-width="1"/>
<circle cx="1864" cy="27" r="9" fill="#dbe8f8" stroke="#3060a8" stroke-width="2"/><rect x="1858" y="25.5" width="12" height="3" fill="#2a56a0"/><rect x="1862.5" y="21" width="3" height="12" fill="#2a56a0"/><path d="M1871 34 L1882 45" stroke="#1f2f5a" stroke-width="3.2" stroke-linecap="round"/>
<g fill="none" stroke="#555555" stroke-width="1.9">
<circle cx="554.8" cy="296.9" r="39"/>
<circle cx="668.9" cy="296.9" r="39"/><circle cx="668.9" cy="296.9" r="30.3"/>
<circle cx="782.9" cy="296.9" r="34.7" stroke-width="10"/>
<path d="M857.5 259.6 L961.5 259.6 L909.5 336.7 Z"/>
<rect x="997.3" y="251" width="172.7" height="86.3"/>
<path d="M1205.3 294 L1291.6 251 L1377.9 294 L1291.6 337.2 Z"/>
<ellipse cx="1506.8" cy="289" rx="94.8" ry="47.6"/>
<path d="M1652.6 307.6 A13.4 13.4 0 1 1 1658.4 283.1 A11.6 11.6 0 0 1 1667.7 261.9 A21.2 21.2 0 0 1 1708.2 255 A12.6 12.6 0 0 1 1726.1 239.9 A14.5 14.5 0 0 1 1752.7 249.2 A19.4 19.4 0 0 1 1783.4 270.8 A15.4 15.4 0 0 1 1812.3 276.9 A11.4 11.4 0 0 1 1833.1 286.2 A7.4 7.4 0 1 1 1835.4 297.4 A11.5 11.5 0 0 1 1821 307 A8.7 8.7 0 0 1 1804.8 307.6 A26.7 26.7 0 0 1 1763.7 318 A17.1 17.1 0 0 1 1731.3 325.5 A24.5 24.5 0 0 1 1693.1 308.8 A24.2 24.2 0 0 1 1652.6 307.6 Z"/>
<rect x="1881.9" y="233.4" width="121.4" height="103.9"/><line x1="1881.9" y1="276.9" x2="2003.3" y2="276.9"/>
<rect x="2042" y="233.4" width="120.6" height="103.9" rx="17"/><line x1="2042" y1="276.9" x2="2162.6" y2="276.9"/>
<rect x="2205" y="206.7" width="120.9" height="130.1" rx="18"/><line x1="2205" y1="250.8" x2="2325.9" y2="250.8"/><line x1="2205" y1="293.8" x2="2325.9" y2="293.8"/>
<path d="M2369 242.8 L2369 308 A51.75 28.5 0 0 0 2472.5 308 L2472.5 242.8"/><ellipse cx="2420.75" cy="242.8" rx="51.75" ry="28.5"/>
<line x1="521" y1="429.3" x2="694.9" y2="429.3"/><line x1="521" y1="472.1" x2="694.9" y2="472.1"/>
<path d="M901.9 429.3 L728.8 429.3 L728.8 472.1 L901.9 472.1"/>
<path d="M1109 429.3 L935.5 429.3 L935.5 472.1 L1109 472.1 M987 429.3 L987 472.1"/>
</g>
<text x="529.7" y="222" font-size="25" text-anchor="start" fill="#282828" stroke="#282828" stroke-width="0.3" letter-spacing="1.03">Data Flow Diagram</text>
<text x="556.39" y="375.5" font-size="20" text-anchor="middle" fill="#282828" stroke="#282828" stroke-width="0.3" letter-spacing="1.38">State</text>
<text x="670.05" y="375.5" font-size="20" text-anchor="middle" fill="#282828" stroke="#282828" stroke-width="0.3" letter-spacing="1.1">Start State</text>
<text x="783.41" y="375.5" font-size="20" text-anchor="middle" fill="#282828" stroke="#282828" stroke-width="0.3" letter-spacing="1.02">Stop State</text>
<text x="910.01" y="375.5" font-size="20" text-anchor="middle" fill="#282828" stroke="#282828" stroke-width="0.3" letter-spacing="1.02">Stop State</text>
<text x="1083.87" y="368.8" font-size="20" text-anchor="middle" fill="#282828" stroke="#282828" stroke-width="0.3" letter-spacing="0.74">External</text>
<text x="1084.1" y="392.6" font-size="20" text-anchor="middle" fill="#282828" stroke="#282828" stroke-width="0.3" letter-spacing="1.2">Interactor</text>
<text x="1292.13" y="367.9" font-size="20" text-anchor="middle" fill="#282828" stroke="#282828" stroke-width="0.3" letter-spacing="1.06">Entity</text>
<text x="1291.94" y="391.7" font-size="20" text-anchor="middle" fill="#282828" stroke="#282828" stroke-width="0.3" letter-spacing="0.69">Relationship</text>
<text x="1508.65" y="374.7" font-size="20" text-anchor="middle" fill="#282828" stroke="#282828" stroke-width="0.3" letter-spacing="0.31">Oval Process</text>
<text x="1742.76" y="374.7" font-size="20" text-anchor="middle" fill="#282828" stroke="#282828" stroke-width="0.3" letter-spacing="0.92">Object</text>
<text x="1942.83" y="264.3" font-size="20" text-anchor="middle" fill="#282828" stroke="#282828" stroke-width="0.3" letter-spacing="1.06">Entity</text>
<text x="2102.53" y="264.3" font-size="20" text-anchor="middle" fill="#282828" stroke="#282828" stroke-width="0.3" letter-spacing="1.06">Entity</text>
<text x="2266.4" y="238.4" font-size="20" text-anchor="middle" fill="#282828" stroke="#282828" stroke-width="0.3" letter-spacing="2.0">ID</text>
<text x="2266.22" y="281.2" font-size="20" text-anchor="middle" fill="#282828" stroke="#282828" stroke-width="0.3" letter-spacing="1.63">Text</text>
<text x="2265.74" y="324.7" font-size="20" text-anchor="middle" fill="#282828" stroke="#282828" stroke-width="0.3" letter-spacing="0.67">Location</text>
<text x="2420.72" y="300.8" font-size="20" text-anchor="middle" fill="#282828" stroke="#282828" stroke-width="0.3" letter-spacing="0.43">Data</text>
<text x="1942.83" y="374.4" font-size="20" text-anchor="middle" fill="#282828" stroke="#282828" stroke-width="0.3" letter-spacing="1.06">Entity</text>
<text x="2102.53" y="372.5" font-size="20" text-anchor="middle" fill="#282828" stroke="#282828" stroke-width="0.3" letter-spacing="1.06">Entity</text>
<text x="2102.42" y="396.3" font-size="20" text-anchor="middle" fill="#282828" stroke="#282828" stroke-width="0.3" letter-spacing="0.84">(Rounded</text>
<text x="2102.45" y="420.1" font-size="20" text-anchor="middle" fill="#282828" stroke="#282828" stroke-width="0.3" letter-spacing="0.9">Corners)</text>
<text x="2265.97" y="367.7" font-size="20" text-anchor="middle" fill="#282828" stroke="#282828" stroke-width="0.3" letter-spacing="1.14">Entity with ID and</text>
<text x="2265.76" y="391.4" font-size="20" text-anchor="middle" fill="#282828" stroke="#282828" stroke-width="0.3" letter-spacing="0.71">Location Mention</text>
<text x="2265.82" y="415.1" font-size="20" text-anchor="middle" fill="#282828" stroke="#282828" stroke-width="0.3" letter-spacing="0.84">(Rounded</text>
<text x="2265.85" y="438.8" font-size="20" text-anchor="middle" fill="#282828" stroke="#282828" stroke-width="0.3" letter-spacing="0.9">Corners)</text>
<text x="2420.97" y="374.4" font-size="20" text-anchor="middle" fill="#282828" stroke="#282828" stroke-width="0.3" letter-spacing="0.94">Data Store</text>
<text x="962.5" y="460" font-size="20" text-anchor="middle" fill="#282828" stroke="#282828" stroke-width="0.3" letter-spacing="2.0">ID</text>
<text x="588.47" y="506.4" font-size="20" text-anchor="middle" fill="#282828" stroke="#282828" stroke-width="0.3" letter-spacing="0.94">Data Store</text>
<text x="797.97" y="506.4" font-size="20" text-anchor="middle" fill="#282828" stroke="#282828" stroke-width="0.3" letter-spacing="0.94">Data Store</text>
<text x="1050.11" y="506.4" font-size="20" text-anchor="middle" fill="#282828" stroke="#282828" stroke-width="0.3" letter-spacing="1.22">Data Store (with ID)</text>
<text x="511.8" y="574.7" font-size="25" text-anchor="start" fill="#282828" stroke="#282828" stroke-width="0.3" letter-spacing="0.99">Gane-Sarson notation</text>
<g fill="none" stroke="#555555" stroke-width="1.9">
<path d="M539.3 624.8 L677.6 624.8 L694.6 641.8 L557.2 641.8 L557.2 780.1 L539.3 763.3 Z" fill="#7a7a7a" stroke-linejoin="round"/><path d="M539.3 624.8 L557.2 641.8"/>
<rect x="557.2" y="641.8" width="137.4" height="138.3" fill="#fff"/>
<rect x="563" y="649" width="29" height="28.4"/>
<rect x="744.7" y="606.5" width="139.4" height="173.6" rx="11"/><line x1="744.7" y1="646.2" x2="884.1" y2="646.2"/>
<g stroke="#888"><rect x="934.7" y="606.5" width="138.9" height="169.3" rx="11"/><line x1="934.7" y1="641.2" x2="1073.6" y2="641.2"/><line x1="934.7" y1="679.4" x2="1073.6" y2="679.4"/></g>
<path d="M1281 728.4 L1107.7 728.4 L1107.7 779.6 L1281 779.6 M1159.5 728.4 L1159.5 779.6"/>
<path d="M1322.7 779.6 L1383.7 779.6 A34.3 34.3 0 0 1 1452.3 779.6 L1513.9 779.6"/>
<path d="M1537.6 659 L1590.5 659 L1651 751"/><path d="M1659.1 607.5 L1659.1 659 L1721 751"/>
<path d="M1720 769.5" />
<path d="M1762.5 659.2 L1762.5 710.4 L1883.1 710.4 L1883.1 750"/>
<path d="M1935 676.4 L1935 763 L2025 763"/>
<path d="M2037.5 676.4 L2107 676.4 L2107 763 L2163 763"/>
<path d="M2298.7 676.4 L2229.3 676.4 L2229.3 763 L2284 763"/>
<path d="M2469 765 L2469 676.4 L2364.8 676.4 L2364.8 750"/>
</g>
<g fill="#555555" stroke="none">
<path d="M1658.5 762.2 L1639.6 750.7 L1655.4 740.3 Z"/>
<path d="M1728.5 762.2 L1709.6 750.7 L1725.4 740.3 Z"/>
<path d="M1883.1 762.3 L1873.6 742.3 L1892.6 742.3 Z"/>
<path d="M2038.2 763.0 L2018.2 772.5 L2018.2 753.5 Z"/>
<path d="M2176.4 763.0 L2156.4 772.5 L2156.4 753.5 Z"/>
<path d="M2296.4 763.0 L2276.4 772.5 L2276.4 753.5 Z"/>
<path d="M2364.8 762.3 L2355.3 742.3 L2374.3 742.3 Z"/>
</g>
<text x="578.95" y="672.2" font-size="20" text-anchor="middle" fill="#282828" stroke="#282828" stroke-width="0.3" letter-spacing="1.9">id</text>
<text x="626.02" y="720" font-size="20" text-anchor="middle" fill="#282828" stroke="#282828" stroke-width="0.3" letter-spacing="1.63">Text</text>
<text x="815.65" y="635.5" font-size="20" text-anchor="middle" fill="#282828" stroke="#282828" stroke-width="0.3" letter-spacing="1.9">id</text>
<text x="1005.15" y="633.1" font-size="20" text-anchor="middle" fill="#282828" stroke="#282828" stroke-width="0.3" letter-spacing="1.9">id</text>
<text x="1004.58" y="735.8" font-size="20" text-anchor="middle" fill="#282828" stroke="#282828" stroke-width="0.3" letter-spacing="0.76">location</text>
<text x="1134.55" y="763.5" font-size="20" text-anchor="middle" fill="#282828" stroke="#282828" stroke-width="0.3" letter-spacing="1.9">id</text>
<text x="614.87" y="800.3" font-size="20" text-anchor="middle" fill="#282828" stroke="#282828" stroke-width="0.3" letter-spacing="0.74">External</text>
<text x="615.03" y="825.0" font-size="20" text-anchor="middle" fill="#282828" stroke="#282828" stroke-width="0.3" letter-spacing="1.06">Entity</text>
<text x="817.07" y="807.6" font-size="20" text-anchor="middle" fill="#282828" stroke="#282828" stroke-width="0.3" letter-spacing="0.13">Process</text>
<text x="1004.27" y="800.3" font-size="20" text-anchor="middle" fill="#282828" stroke="#282828" stroke-width="0.3" letter-spacing="0.13">Process</text>
<text x="1004.72" y="825.0" font-size="20" text-anchor="middle" fill="#282828" stroke="#282828" stroke-width="0.3" letter-spacing="1.04">(with Location)</text>
<text x="1195.47" y="808" font-size="20" text-anchor="middle" fill="#282828" stroke="#282828" stroke-width="0.3" letter-spacing="0.94">Data Store</text>
<text x="1418.6" y="811.4" font-size="20" text-anchor="middle" fill="#282828" stroke="#282828" stroke-width="0.3" letter-spacing="2.0">Jump</text>
<text x="1649.25" y="801.3" font-size="20" text-anchor="middle" fill="#282828" stroke="#282828" stroke-width="0.3" letter-spacing="0.5">Angled</text>
<text x="1649.4" y="825.3" font-size="20" text-anchor="middle" fill="#282828" stroke="#282828" stroke-width="0.3" letter-spacing="0.81">connectors</text>
<text x="1823.89" y="801.3" font-size="20" text-anchor="middle" fill="#282828" stroke="#282828" stroke-width="0.3" letter-spacing="1.18">Top to Bottom</text>
<text x="1823.75" y="825.3" font-size="20" text-anchor="middle" fill="#282828" stroke="#282828" stroke-width="0.3" letter-spacing="0.91">Variable</text>
<text x="1823.75" y="849.3" font-size="20" text-anchor="middle" fill="#282828" stroke="#282828" stroke-width="0.3" letter-spacing="0.9">connector</text>
<text x="1977.72" y="801.3" font-size="20" text-anchor="middle" fill="#282828" stroke="#282828" stroke-width="0.3" letter-spacing="1.44">Bottom to</text>
<text x="1977.29" y="825.3" font-size="20" text-anchor="middle" fill="#282828" stroke="#282828" stroke-width="0.3" letter-spacing="0.57">Side</text>
<text x="1977.45" y="849.3" font-size="20" text-anchor="middle" fill="#282828" stroke="#282828" stroke-width="0.3" letter-spacing="0.9">connector</text>
<text x="2125.39" y="808.6" font-size="20" text-anchor="middle" fill="#282828" stroke="#282828" stroke-width="0.3" letter-spacing="0.79">Side to Side</text>
<text x="2125.45" y="832.6" font-size="20" text-anchor="middle" fill="#282828" stroke="#282828" stroke-width="0.3" letter-spacing="0.9">connector</text>
<text x="2262.11" y="801.3" font-size="20" text-anchor="middle" fill="#282828" stroke="#282828" stroke-width="0.3" letter-spacing="0.81">Side to Same</text>
<text x="2261.98" y="825.3" font-size="20" text-anchor="middle" fill="#282828" stroke="#282828" stroke-width="0.3" letter-spacing="0.57">Side</text>
<text x="2262.15" y="849.3" font-size="20" text-anchor="middle" fill="#282828" stroke="#282828" stroke-width="0.3" letter-spacing="0.9">connector</text>
<text x="2408.44" y="801.3" font-size="20" text-anchor="middle" fill="#282828" stroke="#282828" stroke-width="0.3" letter-spacing="1.28">Top to Top</text>
<text x="2408.09" y="825.3" font-size="20" text-anchor="middle" fill="#282828" stroke="#282828" stroke-width="0.3" letter-spacing="0.57">Side</text>
<text x="2408.25" y="849.3" font-size="20" text-anchor="middle" fill="#282828" stroke="#282828" stroke-width="0.3" letter-spacing="0.9">connector</text>
<text x="512" y="876.4" font-size="25" text-anchor="start" fill="#282828" stroke="#282828" stroke-width="0.3" letter-spacing="1.03">Yourdon and Coad notation</text>
<g fill="none" stroke="#555555" stroke-width="1.9">
<rect x="521" y="916.9" width="173" height="174.1" rx="21" stroke="#bbb"/>
<rect x="531.2" y="929.2" width="152.5" height="150.8" rx="23"/><line x1="531.2" y1="975.8" x2="683.7" y2="975.8"/><line x1="531.2" y1="1033.4" x2="683.7" y2="1033.4"/>
<rect x="723.4" y="919" width="138.4" height="172" rx="18"/><line x1="723.4" y1="975.8" x2="861.8" y2="975.8"/><line x1="723.4" y1="1033.4" x2="861.8" y2="1033.4"/>
<rect x="892.5" y="1024" width="138.4" height="69.1"/>
<path d="M1133.7 922.8 L1133.7 1059 M1065.1 1092.4 L1065.1 1058 L1201.6 1058 L1201.6 1092.4 M1111.9 1058 A21.8 21.8 0 0 1 1155.5 1058"/>
<path d="M1288.3 926.1 L1288.3 988.7 M1288.3 988.7 L1267.6 1030.5 L1310.4 1030.5 Z M1288.3 1030.5 L1288.3 1093.4"/>
<path d="M1357.3 1058 L1374.7 1023.8 L1478.4 1023.8 L1495.8 1058 L1478.4 1092.4 L1374.7 1092.4 Z"/>
<path d="M1539.3 1023.8 L1642.4 1022.5 Q1662 1040 1659.8 1058 Q1660 1078 1642.4 1092.4 L1539.3 1091.5 Q1521.3 1076 1521.3 1058 Q1521.3 1040 1539.3 1023.8 Z"/>
<rect x="1687.6" y="1023.8" width="138.2" height="68.6"/>
<circle cx="1903.9" cy="1041" r="52"/>
<circle cx="2034.6" cy="1041" r="52"/><circle cx="2034.6" cy="1041" r="41.9"/>
<circle cx="2164.8" cy="1041" r="52"/>
<circle cx="2295" cy="1041" r="52"/><circle cx="2295" cy="1041" r="40.5"/>
<circle cx="2425.7" cy="1041" r="46.3" stroke-width="12.8"/>
<path d="M547.9 1247.8 L651.4 1247.8 L599.2 1351.2 Z"/>
<ellipse cx="772.7" cy="1272.6" rx="71.9" ry="43"/>
<path d="M702.3 1195.5 L738.7 1233.9 M858.7 1195.5 L814 1236.9 M738.7 1312.2 L702.3 1351.2 M814 1312.2 L858.7 1351.2"/>
<ellipse cx="990.9" cy="1278.5" rx="60.5" ry="36.4"/>
<path d="M929.1 1231.9 L952.9 1249.4 M1053.7 1231.9 L1029.9 1249.4 M956.2 1309.6 L928.8 1332 M1026.3 1309.6 L1054.4 1332"/>
<path d="M1115.5 1334.7 Q1140 1282 1192.6 1281.8 Q1240 1282 1262 1322"/>
<path d="M1355.1 1292 Q1400 1248 1452.4 1247.9 Q1510 1248 1538 1283"/>
<path d="M1633.2 1266.2 A66 66 0 1 1 1641 1344"/>
<line x1="1796.2" y1="1316.5" x2="1952.9" y2="1316.5"/><line x1="1796.2" y1="1368.7" x2="1952.9" y2="1368.7"/>
<line x1="1994.2" y1="1368.7" x2="2185.9" y2="1368.7"/>
<line x1="2218" y1="1368.7" x2="2410" y2="1368.7"/>
</g>
<g fill="#555555" stroke="none">
<path d="M1270.2 1333.7 L1257.0 1323.0 L1266.9 1317.0 Z"/>
<path d="M1548.3 1290.1 L1531.7 1286.3 L1538.0 1276.5 Z"/>
<path d="M1634.1 1336.6 L1650.4 1341.6 L1643.4 1350.8 Z"/>
<path d="M2426.6 1368.7 L2410.6 1375.2 L2410.6 1362.2 Z"/>
</g>
<text x="608.37" y="962.5" font-size="20" text-anchor="middle" fill="#282828" stroke="#282828" stroke-width="0.3" letter-spacing="0.73">Class-&amp;-Object</text>
<text x="611.73" y="996.8" font-size="20" text-anchor="middle" fill="#282828" stroke="#282828" stroke-width="0.3" letter-spacing="1.06">Attributes</text>
<text x="611.34" y="1054" font-size="20" text-anchor="middle" fill="#282828" stroke="#282828" stroke-width="0.3" letter-spacing="0.67">Services</text>
<text x="792.05" y="956.6" font-size="20" text-anchor="middle" fill="#282828" stroke="#282828" stroke-width="0.3" letter-spacing="0.1">Class</text>
<text x="796.28" y="996.8" font-size="20" text-anchor="middle" fill="#282828" stroke="#282828" stroke-width="0.3" letter-spacing="1.16">Attribute</text>
<text x="796.05" y="1054" font-size="20" text-anchor="middle" fill="#282828" stroke="#282828" stroke-width="0.3" letter-spacing="0.7">Service</text>
<text x="961.89" y="1067.5" font-size="20" text-anchor="middle" fill="#282828" stroke="#282828" stroke-width="0.3" letter-spacing="1.38">State</text>
<text x="1267.95" y="955.2" font-size="20" text-anchor="middle" fill="#282828" stroke="#282828" stroke-width="0.3" letter-spacing="1.9">1,m</text>
<text x="1309.4" y="1080.7" font-size="20" text-anchor="middle" fill="#282828" stroke="#282828" stroke-width="0.3" letter-spacing="0.0">1</text>
<text x="1903.97" y="1049.7" font-size="20" text-anchor="middle" fill="#282828" stroke="#282828" stroke-width="0.3" letter-spacing="0.13">Process</text>
<text x="2034.66" y="1049.7" font-size="20" text-anchor="middle" fill="#282828" stroke="#282828" stroke-width="0.3" letter-spacing="0.13">Process</text>
<text x="2165.49" y="1049.7" font-size="20" text-anchor="middle" fill="#282828" stroke="#282828" stroke-width="0.3" letter-spacing="1.38">State</text>
<text x="2295.49" y="1037.5" font-size="20" text-anchor="middle" fill="#282828" stroke="#282828" stroke-width="0.3" letter-spacing="0.98">Multi-</text>
<text x="2295.69" y="1061.2" font-size="20" text-anchor="middle" fill="#282828" stroke="#282828" stroke-width="0.3" letter-spacing="1.38">State</text>
<text x="2426.34" y="1049.7" font-size="20" text-anchor="middle" fill="#282828" stroke="#282828" stroke-width="0.3" letter-spacing="1.27">Stop</text>
<text x="614.76" y="1114.1" font-size="20" text-anchor="middle" fill="#282828" stroke="#282828" stroke-width="0.3" letter-spacing="0.53">Class and</text>
<text x="615.04" y="1138.5" font-size="20" text-anchor="middle" fill="#282828" stroke="#282828" stroke-width="0.3" letter-spacing="1.08">object</text>
<text x="788.75" y="1120" font-size="20" text-anchor="middle" fill="#282828" stroke="#282828" stroke-width="0.3" letter-spacing="0.1">Class</text>
<text x="961.89" y="1120" font-size="20" text-anchor="middle" fill="#282828" stroke="#282828" stroke-width="0.3" letter-spacing="1.38">State</text>
<text x="1134.07" y="1114.2" font-size="20" text-anchor="middle" fill="#282828" stroke="#282828" stroke-width="0.3" letter-spacing="0.73">Generalization</text>
<text x="1134.08" y="1137.7" font-size="20" text-anchor="middle" fill="#282828" stroke="#282828" stroke-width="0.3" letter-spacing="0.75">and</text>
<text x="1134.02" y="1161.2" font-size="20" text-anchor="middle" fill="#282828" stroke="#282828" stroke-width="0.3" letter-spacing="0.63">specialization</text>
<text x="1134.22" y="1184.7" font-size="20" text-anchor="middle" fill="#282828" stroke="#282828" stroke-width="0.3" letter-spacing="1.04">structure</text>
<text x="1288.75" y="1114.2" font-size="20" text-anchor="middle" fill="#282828" stroke="#282828" stroke-width="0.3" letter-spacing="0.9">Whole-part</text>
<text x="1288.82" y="1137.7" font-size="20" text-anchor="middle" fill="#282828" stroke="#282828" stroke-width="0.3" letter-spacing="1.04">structure</text>
<text x="1426.92" y="1120.2" font-size="20" text-anchor="middle" fill="#282828" stroke="#282828" stroke-width="0.3" letter-spacing="0.84">Condition</text>
<text x="1591.57" y="1120.2" font-size="20" text-anchor="middle" fill="#282828" stroke="#282828" stroke-width="0.3" letter-spacing="0.73">Loop</text>
<text x="1754.27" y="1114.0" font-size="20" text-anchor="middle" fill="#282828" stroke="#282828" stroke-width="0.3" letter-spacing="0.74">External</text>
<text x="1754.44" y="1137.6" font-size="20" text-anchor="middle" fill="#282828" stroke="#282828" stroke-width="0.3" letter-spacing="1.08">interactor</text>
<text x="1909.21" y="1113.9" font-size="20" text-anchor="middle" fill="#282828" stroke="#282828" stroke-width="0.3" letter-spacing="0.43">Data</text>
<text x="1909.2" y="1137.0" font-size="20" text-anchor="middle" fill="#282828" stroke="#282828" stroke-width="0.3" letter-spacing="0.4">process</text>
<text x="2035.08" y="1113.9" font-size="20" text-anchor="middle" fill="#282828" stroke="#282828" stroke-width="0.3" letter-spacing="0.97">Multiple</text>
<text x="2034.8" y="1137.0" font-size="20" text-anchor="middle" fill="#282828" stroke="#282828" stroke-width="0.3" letter-spacing="0.4">process</text>
<text x="2167.69" y="1119.7" font-size="20" text-anchor="middle" fill="#282828" stroke="#282828" stroke-width="0.3" letter-spacing="1.38">State</text>
<text x="2297.21" y="1119.7" font-size="20" text-anchor="middle" fill="#282828" stroke="#282828" stroke-width="0.3" letter-spacing="1.02">Multi-state</text>
<text x="2426.5" y="1119.7" font-size="20" text-anchor="middle" fill="#282828" stroke="#282828" stroke-width="0.3" letter-spacing="1.0">Stop state</text>
<text x="599.63" y="1283.1" font-size="20" text-anchor="middle" fill="#282828" stroke="#282828" stroke-width="0.3" letter-spacing="1.27">Stop</text>
<text x="774.62" y="1283.1" font-size="20" text-anchor="middle" fill="#282828" stroke="#282828" stroke-width="0.3" letter-spacing="0.45">Process name</text>
<text x="990.97" y="1276.5" font-size="20" text-anchor="middle" fill="#282828" stroke="#282828" stroke-width="0.3" letter-spacing="0.13">Process</text>
<text x="991.5" y="1300.7" font-size="20" text-anchor="middle" fill="#282828" stroke="#282828" stroke-width="0.3" letter-spacing="1.2">name</text>
<text x="598.0" y="1396.5" font-size="20" text-anchor="middle" fill="#282828" stroke="#282828" stroke-width="0.3" letter-spacing="1.0">Stop state</text>
<text x="773.77" y="1396.5" font-size="20" text-anchor="middle" fill="#282828" stroke="#282828" stroke-width="0.3" letter-spacing="0.13">Process</text>
<text x="989.66" y="1396.5" font-size="20" text-anchor="middle" fill="#282828" stroke="#282828" stroke-width="0.3" letter-spacing="0.72">Process (offset)</text>
<text x="1196.37" y="1388.3" font-size="20" text-anchor="middle" fill="#282828" stroke="#282828" stroke-width="0.3" letter-spacing="0.93">Center to center</text>
<text x="1196.19" y="1412.0" font-size="20" text-anchor="middle" fill="#282828" stroke="#282828" stroke-width="0.3" letter-spacing="0.57">flow</text>
<text x="1454.87" y="1389.4" font-size="20" text-anchor="middle" fill="#282828" stroke="#282828" stroke-width="0.3" letter-spacing="0.93">Center to center</text>
<text x="1454.69" y="1413.3" font-size="20" text-anchor="middle" fill="#282828" stroke="#282828" stroke-width="0.3" letter-spacing="0.57">flow</text>
<text x="1691.06" y="1396.5" font-size="20" text-anchor="middle" fill="#282828" stroke="#282828" stroke-width="0.3" letter-spacing="0.72">Loop on center</text>
<text x="1868.54" y="1396.5" font-size="20" text-anchor="middle" fill="#282828" stroke="#282828" stroke-width="0.3" letter-spacing="1.08">Data store</text>
<text x="2087.77" y="1396.5" font-size="20" text-anchor="middle" fill="#282828" stroke="#282828" stroke-width="0.3" letter-spacing="1.14">Instance</text>
<text x="2316.43" y="1396.5" font-size="20" text-anchor="middle" fill="#282828" stroke="#282828" stroke-width="0.3" letter-spacing="0.25">Message</text>
</svg>
</body></html>
